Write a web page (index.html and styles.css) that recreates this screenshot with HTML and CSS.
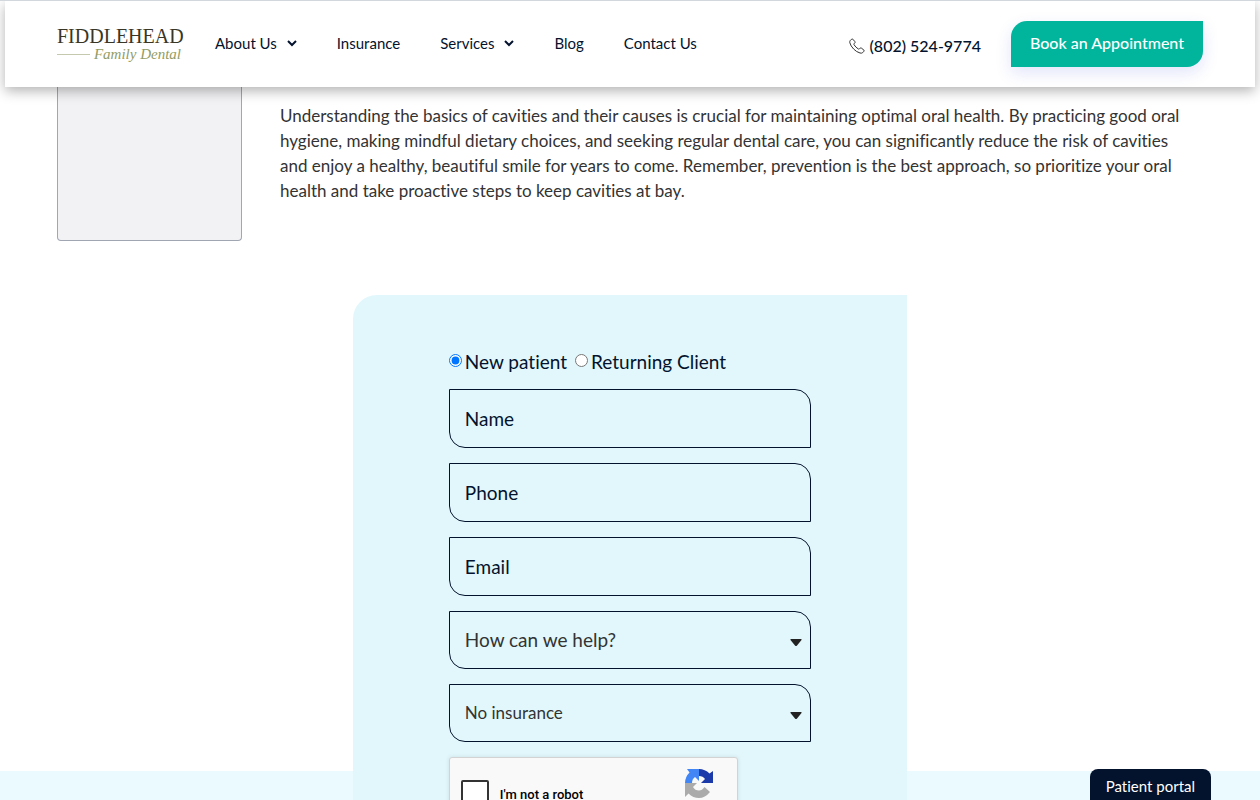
FILE: index.html
```html
<!DOCTYPE html>
<html lang="en">
<head>
    <meta charset="UTF-8">
    <meta name="viewport" content="width=device-width, initial-scale=1.0">
    <title>Fiddlehead Family Dental</title>
    <link rel="stylesheet" href="styles.css">
</head>
<body>
<!-- Header -->
<header class="header">
    <a href="#" class="logo">
        <span class="logo-name">FIDDLEHEAD</span>
        <span class="logo-sub">Family Dental</span>
    </a>
    <nav>
        <ul class="menu">
            <li><a href="#">About Us
                <svg class="chevron" viewBox="0 0 10 7"><path d="M1 1l4 4 4-4"/></svg></a></li>
            <li><a href="#">Insurance</a></li>
            <li><a href="#">Services
                <svg class="chevron" viewBox="0 0 10 7"><path d="M1 1l4 4 4-4"/></svg></a></li>
            <li><a href="#">Blog</a></li>
            <li><a href="#">Contact Us</a></li>
        </ul>
    </nav>
    <a href="tel:8025249774" class="phone">
        <svg viewBox="0 0 16 16"><path d="M1.2 2.6L2.6 1.2Q3.2.7 3.8 1.2L5.9 3.6Q6.4 4.2 5.8 4.9L5 5.8Q4.7 6.2 5.1 6.8Q6.8 9.5 9.4 11Q10 11.3 10.4 10.9L11.1 10.2Q11.8 9.6 12.4 10.1L14.9 12.1Q15.4 12.7 14.9 13.3L13.6 14.7Q12.8 15.4 11 15Q7.5 14 4.6 11Q1.7 8 .8 4.7Q.6 3.4 1.2 2.6Z"/></svg>
        (802) 524-9774
    </a>
    <a href="#" class="book-btn">Book an Appointment</a>
</header>

<main>
    <!-- Article -->
    <section class="article">
        <aside class="sidebar"></aside>
        <p>Understanding the basics of cavities and their causes is crucial for maintaining optimal oral health. By practicing good oral hygiene, making mindful dietary choices, and seeking regular dental care, you can significantly reduce the risk of cavities and enjoy a healthy, beautiful smile for years to come. Remember, prevention is the best approach, so prioritize your oral health and take proactive steps to keep cavities at bay.</p>
    </section>

    <!-- Appointment Form -->
    <form class="appointment">
        <div class="patient-type">
            <input type="radio" name="patient" id="newPatient" checked>
            <label for="newPatient">New patient</label>
            <input type="radio" name="patient" id="returning">
            <label for="returning">Returning Client</label>
        </div>
        <input class="field" type="text" placeholder="Name" aria-label="Name">
        <input class="field" type="tel" placeholder="Phone" aria-label="Phone">
        <input class="field" type="email" placeholder="Email" aria-label="Email">
        <div class="select-wrap">
            <select class="field" aria-label="How can we help?">
                <option>How can we help?</option>
            </select>
            <svg class="caret" viewBox="0 0 12 7"><path d="M1 0h10q1 0 .5 1L7 6.4q-1 1-2 0L.5 1Q0 0 1 0z"/></svg>
        </div>
        <div class="select-wrap">
            <select class="field small" aria-label="Insurance">
                <option>No insurance</option>
            </select>
            <svg class="caret" viewBox="0 0 12 7"><path d="M1 0h10q1 0 .5 1L7 6.4q-1 1-2 0L.5 1Q0 0 1 0z"/></svg>
        </div>
        <div class="captcha">
            <input type="checkbox" id="robot">
            <label for="robot">I'm not a robot</label>
            <svg class="captcha-logo" viewBox="0 0 30 30">
                <path fill="#1c3aa9" d="M15 1Q21 1 25.5 5.5L29 3V15H17L21 11Q19 8 15 8Z"/>
                <path fill="#4285f4" d="M15 1V13L11 9Q8 11 8 15H1Q1 9 5.5 4.5L3 1Z"/>
                <path fill="#ababab" d="M1 15H13L9 19Q11 22.5 15 22.5Q18 22.5 20.5 19L26 24Q21 30 15 30Q9 30 4.5 25.5L1 29Z"/>
            </svg>
        </div>
    </form>
    <div class="band"></div>
</main>

<a href="#" class="portal">Patient portal</a>
</body>
</html>
```
FILE: styles.css
```css
* {
    box-sizing: border-box;
}

body {
    margin: 0;
    height: 100vh;
    overflow: hidden;
    border-top: 1px solid #d2d7de;
    background: #fff;
    color: #333;
    font-family: Lato, "Liberation Sans", sans-serif;
    font-size: 16px;
    font-variant-ligatures: none;
}

a {
    color: #04132d;
    text-decoration: none;
}

/* Header */
.header {
    position: relative;
    z-index: 2;
    display: flex;
    align-items: center;
    height: 86px;
    margin: 0 5px;
    padding: 0 52px;
    background: #fff;
    box-shadow: 0 4px 12px rgba(0, 0, 0, 0.3);
}

.logo {
    display: flex;
    flex-direction: column;
    width: 124px;
    margin-right: 34px;
    font-family: "Liberation Serif", serif;
    color: #3a3626;
}

.logo-name {
    font-size: 20px;
    line-height: 20px;
}

.logo-sub {
    display: flex;
    align-items: center;
    gap: 4px;
    font-size: 15px;
    font-style: italic;
    line-height: 16px;
    color: #939c62;
}

.logo-sub::before {
    content: "";
    flex: 1;
    height: 1px;
    background: #c5c9ae;
}

.menu {
    display: flex;
    gap: 40px;
    margin: 0;
    padding: 0 0 2px;
    list-style: none;
    font-size: 15px;
}

.menu a {
    display: flex;
    align-items: center;
    gap: 10px;
}

.chevron {
    width: 10px;
    height: 7px;
    fill: none;
    stroke: #04132d;
    stroke-width: 2;
}

.phone {
    display: flex;
    align-items: center;
    gap: 5px;
    margin-left: auto;
    padding-top: 3px;
    font-size: 16px;
    font-weight: 500;
}

.phone svg {
    width: 16px;
    height: 16px;
    fill: none;
    stroke: #333;
    stroke-width: 1;
}

.book-btn {
    margin-left: 30px;
    padding: 11px 19px 13px;
    border-radius: 16px 0;
    background: #00b59c;
    box-shadow: 0 6px 16px rgba(60, 80, 220, 0.15);
    color: #fff;
    font-size: 16px;
    font-weight: 500;
    line-height: 22px;
}

/* Article */
.article {
    display: flex;
    gap: 38px;
    padding: 0 57px;
}

.sidebar {
    flex: none;
    width: 185px;
    height: 154px;
    border: 1px solid #a0a6b2;
    border-top: 0;
    border-radius: 0 0 4px 4px;
    background: #f2f2f4;
}

.article p {
    margin: 16px 0 0;
    padding-right: 10px;
    font-size: 17px;
    line-height: 25px;
}

/* Appointment Form */
.appointment {
    position: relative;
    z-index: 1;
    display: flex;
    flex-direction: column;
    gap: 15px;
    width: 44%;
    margin: 54px auto 0;
    padding: 54px 96px 60px;
    border-radius: 24px 0 0 0;
    background: #e1f7fc;
    color: #04132d;
    font-size: 19px;
}

.patient-type {
    display: flex;
    align-items: center;
    height: 25px;
}

.patient-type input {
    width: 13px;
    height: 13px;
    margin: 0 3px 3px 0;
}

.patient-type label {
    margin-right: 8px;
}

.field {
    display: block;
    width: 100%;
    height: 59px;
    padding: 0 15px 1px;
    border: 1px solid #04132d;
    border-radius: 0 16px;
    background: transparent;
    color: #333;
    font-family: inherit;
    font-size: 19px;
    appearance: none;
}

.field::placeholder {
    color: #04132d;
    opacity: 1;
}

.select-wrap {
    position: relative;
}

select.field {
    height: 58px;
}

.field.small {
    font-size: 17px;
}

.caret {
    position: absolute;
    top: 28px;
    right: 9px;
    width: 12px;
    height: 7px;
    fill: #222;
    pointer-events: none;
}

.captcha {
    display: flex;
    align-items: center;
    width: 289px;
    height: 74px;
    padding: 0 23px 0 11px;
    border: 1px solid #d3d3d3;
    border-radius: 3px;
    background: #f9f9f9;
    box-shadow: 0 0 4px rgba(0, 0, 0, 0.1);
    color: #000;
    font-family: Roboto, sans-serif;
    font-size: 13px;
    font-weight: 500;
}

.captcha input {
    width: 28px;
    height: 28px;
    margin: 0 11px 0 0;
    border: 2px solid #333;
    border-radius: 2px;
    background: #fff;
    appearance: none;
}

.captcha-logo {
    align-self: flex-start;
    width: 30px;
    height: 30px;
    margin: 10px 0 0 auto;
}

.band {
    height: 400px;
    margin-top: -120px;
    background: #eafaff;
}

/* Patient portal tab */
.portal {
    position: fixed;
    z-index: 3;
    right: 49px;
    bottom: 0;
    padding: 6px 16px 3px;
    border-radius: 8px 8px 0 0;
    background: #04132d;
    color: #fff;
    font-size: 15px;
    line-height: 22px;
}
```
